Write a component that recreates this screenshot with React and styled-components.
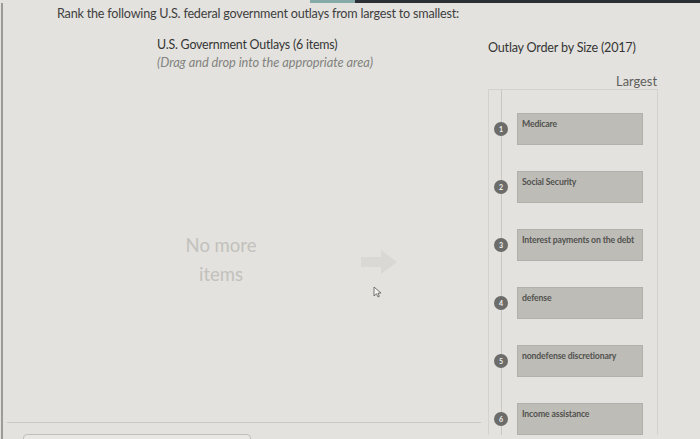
import React from 'react'
import styled, { createGlobalStyle } from 'styled-components'

const Global = createGlobalStyle`
  html, body { margin: 0; padding: 0; }
  body {
    width: 700px;
    height: 439px;
    overflow: hidden;
    background: #e3e2de;
    font-family: Lato, "Open Sans", sans-serif;
  }
`

const items = [
  'Medicare',
  'Social Security',
  'Interest payments on the debt',
  'defense',
  'nondefense discretionary',
  'Income assistance',
]

function App() {
  return (
    <>
      <Global />
      <Page>
        <TopBar>
          <Gap />
          <Teal />
          <Dark />
        </TopBar>
        <Frame>
          <Title>Rank the following U.S. federal government outlays from largest to smallest:</Title>
          <Columns>
            <LeftPanel>
              <PanelHead>
                <HeadText>U.S. Government Outlays (6 items)</HeadText>
                <Hint>(Drag and drop into the appropriate area)</Hint>
              </PanelHead>
              <DropBody>
                <NoMore>No more<br />items</NoMore>
                <ArrowWrap>
                  <svg width="36" height="24" viewBox="0 0 36 24">
                    <path d="M0 7 H20 V0 L36 12 L20 24 V17 H0 Z" fill="#d9d8d4" />
                  </svg>
                  <Cursor width="9" height="12" viewBox="0 0 9 12">
                    <path d="M1 1 L1 10 L3.4 7.8 L5 11 L6.4 10.3 L4.9 7.2 L8 7 Z" fill="#f4f4f2" stroke="#555" strokeWidth="0.8" />
                  </Cursor>
                </ArrowWrap>
              </DropBody>
            </LeftPanel>
            <RightPanel>
              <RightHead>Outlay Order by Size (2017)</RightHead>
              <Largest>Largest</Largest>
              <OrderList>
                {items.map((t, i) => (
                  <Row key={t}>
                    <Num>{i + 1}</Num>
                    <Item>{t}</Item>
                  </Row>
                ))}
              </OrderList>
            </RightPanel>
          </Columns>
          <Footer>
            <FooterBox />
          </Footer>
        </Frame>
      </Page>
    </>
  )
}

export default App

const Page = styled.div`
  width: 700px;
  height: 439px;
  display: flex;
  flex-direction: column;
  overflow: hidden;
`

const TopBar = styled.div`
  display: flex;
  height: 3px;
  flex-shrink: 0;
`
const Gap = styled.div`
  width: 310px;
`
const Teal = styled.div`
  width: 45px;
  background: #86aaa7;
`
const Dark = styled.div`
  flex: 1;
  background: #2b2f36;
`

const Frame = styled.div`
  flex: 1;
  display: flex;
  flex-direction: column;
  border-left: 2px solid #9c9b97;
  margin-left: 1px;
`

const Title = styled.div`
  padding: 3px 0 0 54px;
  font-size: 12.6px;
  line-height: 15px;
  color: #3f3f3f;
  letter-spacing: -0.2px;
`

const Columns = styled.div`
  display: flex;
  height: 402px;
`

const LeftPanel = styled.div`
  width: 474px;
  margin-left: 4px;
  display: flex;
  flex-direction: column;
  border-bottom: 1px solid #c9c8c4;
`

const PanelHead = styled.div`
  padding: 15px 0 0 150px;
`

const HeadText = styled.div`
  font-size: 12.4px;
  line-height: 17px;
  color: #353535;
  letter-spacing: -0.2px;
`

const RightHead = styled(HeadText)`
  font-size: 12.6px;
  letter-spacing: -0.2px;
`

const Hint = styled.div`
  font-size: 12.8px;
  line-height: 18px;
  font-style: italic;
  color: #82827f;
  letter-spacing: -0.05px;
`

const DropBody = styled.div`
  display: flex;
  align-items: flex-start;
  padding-top: 160px;
`

const NoMore = styled.div`
  width: 100px;
  margin-left: 164px;
  text-align: center;
  font-size: 18.5px;
  line-height: 29px;
  color: #c2c1bd;
`

const ArrowWrap = styled.div`
  display: flex;
  flex-direction: column;
  align-items: flex-start;
  margin: 19px 0 0 90px;
`

const Cursor = styled.svg`
  margin: 12px 0 0 12px;
`

const RightPanel = styled.div`
  width: 170px;
  margin-left: 7px;
  padding-top: 18px;
  display: flex;
  flex-direction: column;
`

const Largest = styled.div`
  text-align: right;
  font-size: 12.8px;
  line-height: 16px;
  color: #5e5e5c;
  margin-top: 17px;
  padding-right: 1px;
`

const OrderList = styled.div`
  flex: 1;
  border: 1px solid #d3d2ce;
  border-bottom: none;
  padding-top: 23px;
  display: flex;
  flex-direction: column;
  gap: 26px;
  background-image: linear-gradient(#c8c7c3, #c8c7c3);
  background-size: 1px 100%;
  background-position: 12px 0;
  background-repeat: no-repeat;
`

const Row = styled.div`
  display: grid;
  grid-template-columns: 24px 126px;
  column-gap: 4px;
  align-items: center;
`

const Num = styled.div`
  justify-self: center;
  width: 14px;
  height: 14px;
  border-radius: 50%;
  background: #6c6c6a;
  color: #f1f1ef;
  font-size: 7px;
  font-weight: 700;
  display: flex;
  align-items: center;
  justify-content: center;
`

const Item = styled.div`
  height: 32px;
  box-sizing: border-box;
  background: #bdbcb6;
  border: 1px solid #b1b0aa;
  padding: 5px 0 0 4px;
  font-size: 8.7px;
  font-weight: 700;
  line-height: 10px;
  color: #525250;
  letter-spacing: -0.15px;
`

const Footer = styled.div`
  padding: 11px 0 0 20px;
`

const FooterBox = styled.div`
  width: 226px;
  height: 20px;
  border: 1px solid #c0bfbb;
  border-radius: 4px;
  background: #e8e7e3;
`
